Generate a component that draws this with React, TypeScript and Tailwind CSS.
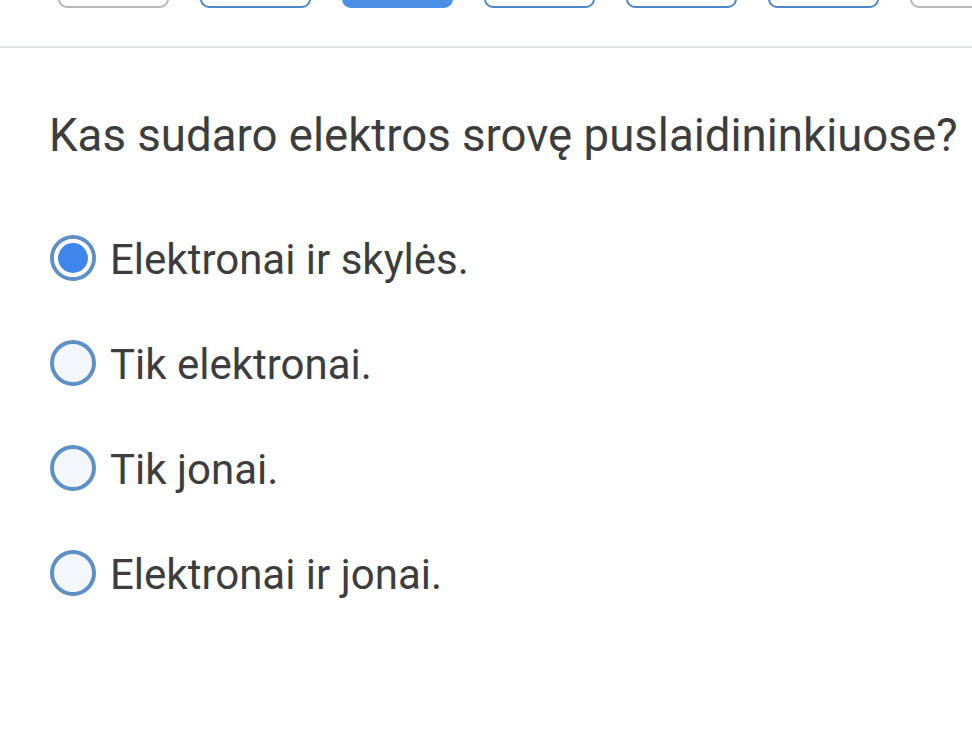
import { useState } from "react";

const tabs = ["done", "answered", "current", "answered", "answered", "answered", "empty"] as const;

const options = [
  "Elektronai ir skylės.",
  "Tik elektronai.",
  "Tik jonai.",
  "Elektronai ir jonai.",
];

function tabClass(state: (typeof tabs)[number]) {
  switch (state) {
    case "current":
      return "bg-[#4a90e6] border-2 border-[#4a90e6]";
    case "answered":
      return "bg-white border-2 border-[#4f88c9]";
    default:
      return "bg-white border-2 border-[#b8b8b8]";
  }
}

export default function App() {
  const [selected, setSelected] = useState(0);

  return (
    <div className="w-[972px] h-[729px] bg-white overflow-hidden font-['Roboto',sans-serif] text-[#3d3d3d]">
      <div className="h-[8px] overflow-hidden flex items-end gap-[31px] pl-[58px]">
        {tabs.map((t, i) => (
          <div
            key={i}
            className={`shrink-0 w-[111px] h-[40px] rounded-b-[9px] ${tabClass(t)}`}
          />
        ))}
      </div>

      <div className="mt-[38px] h-[2px] bg-[#dfe2e6]" />

      <h1 className="mt-[61px] pl-[49px] text-[45.6px] leading-[54px] font-normal whitespace-nowrap">
        Kas sudaro elektros srovę puslaidininkiuose?
      </h1>

      <div className="mt-[42px] pl-[50px] flex flex-col">
        {options.map((opt, i) => (
          <button
            key={opt}
            onClick={() => setSelected(i)}
            className="h-[105px] flex items-center gap-[14px] text-left"
          >
            <span className="w-[46px] h-[46px] shrink-0 rounded-full border-[4px] border-[#5e8fc5] bg-[#f3f7fb] flex items-center justify-center">
              {selected === i && (
                <span className="w-[38px] h-[38px] rounded-full bg-white flex items-center justify-center">
                  <span className="w-[30px] h-[30px] rounded-full bg-[#3f86ec]" />
                </span>
              )}
            </span>
            <span className="text-[42px] leading-none mt-[5px]">{opt}</span>
          </button>
        ))}
      </div>
    </div>
  );
}
